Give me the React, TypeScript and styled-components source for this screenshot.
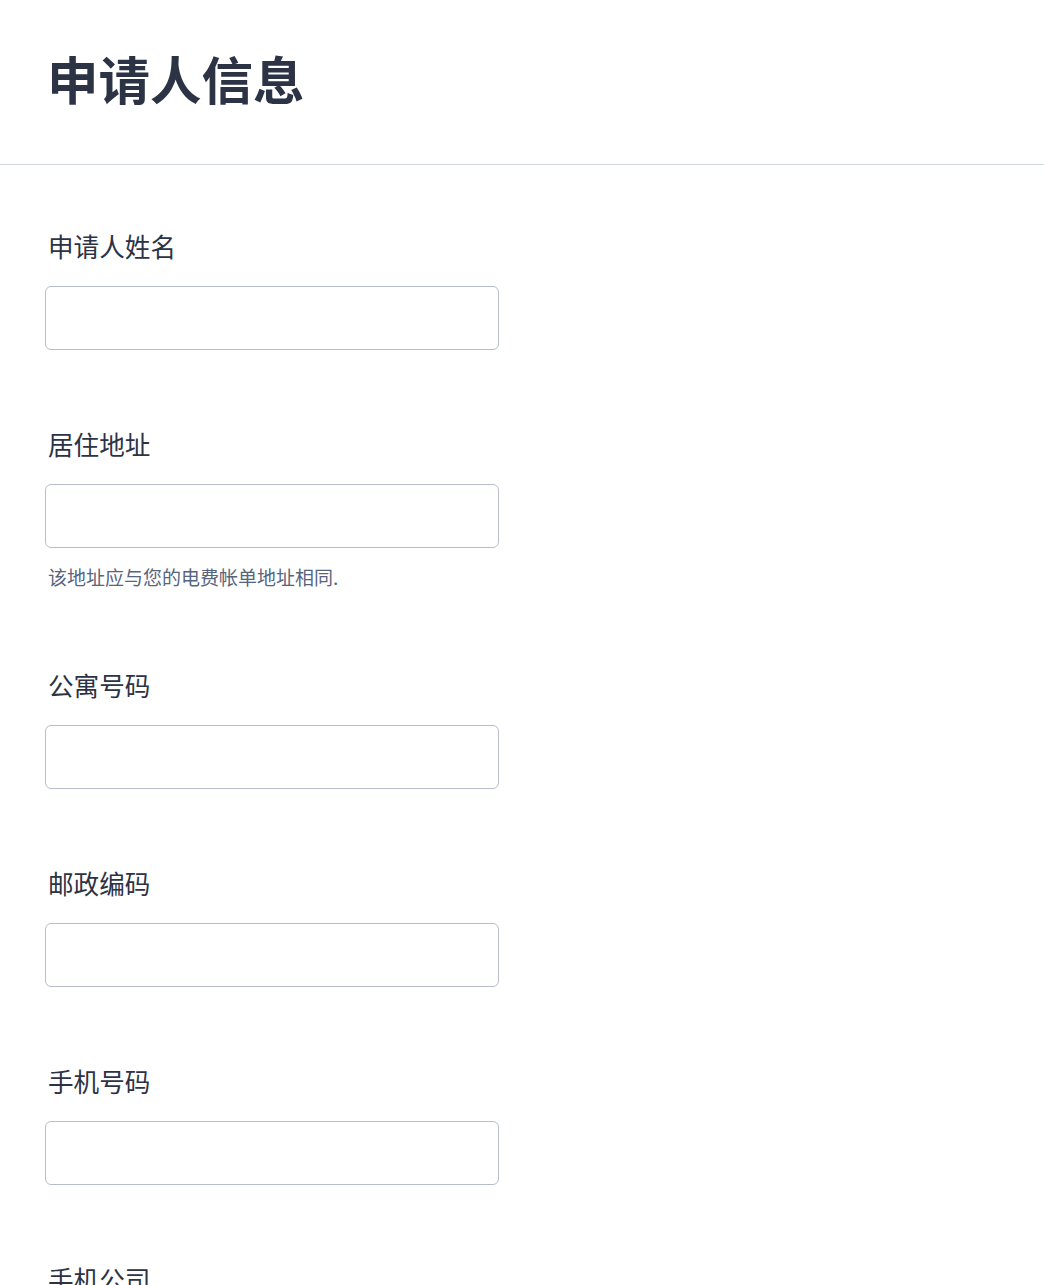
import styled, { createGlobalStyle } from "styled-components";

const GlobalStyle = createGlobalStyle`
  body {
    margin: 0;
    background: #ffffff;
    font-family: "Noto Sans CJK SC", "Noto Sans", sans-serif;
    color: #2c3345;
  }
`;

type FieldProps = {
  label: string;
  hint?: string;
};

const Page = styled.div`
  width: 100%;
  min-height: 1285px;
  background: #ffffff;
`;

const Header = styled.header`
  padding: 48px 47px 56px;
  border-bottom: 1px solid #d3d8df;
`;

const Title = styled.h1`
  margin: 0;
  font-size: 51.5px;
  line-height: 60px;
  font-weight: 700;
  color: #2c3345;
`;

const Form = styled.form`
  display: flex;
  flex-direction: column;
  gap: 76px;
  padding: 63px 45px 40px;
`;

const FieldWrap = styled.div`
  display: flex;
  flex-direction: column;
`;

const Label = styled.label`
  padding-left: 3px;
  margin-bottom: 22px;
  font-size: 25.6px;
  line-height: 36px;
  color: #2c3345;
`;

const Input = styled.input`
  box-sizing: border-box;
  width: 454px;
  height: 64px;
  padding: 0 14px;
  border: 1px solid #b8bdc9;
  border-radius: 6px;
  background: #ffffff;
  font-size: 18px;
  outline: none;
`;

const Hint = styled.div`
  margin-top: 15px;
  padding-left: 3px;
  font-size: 19px;
  line-height: 28px;
  color: #57647e;
`;

function Field({ label, hint }: FieldProps) {
  return (
    <FieldWrap>
      <Label>{label}</Label>
      <Input type="text" />
      {hint && <Hint>{hint}</Hint>}
    </FieldWrap>
  );
}

const fields: FieldProps[] = [
  { label: "申请人姓名" },
  { label: "居住地址", hint: "该地址应与您的电费帐单地址相同." },
  { label: "公寓号码" },
  { label: "邮政编码" },
  { label: "手机号码" },
  { label: "手机公司" },
];

export default function App() {
  return (
    <Page>
      <GlobalStyle />
      <Header>
        <Title>申请人信息</Title>
      </Header>
      <Form onSubmit={(e) => e.preventDefault()}>
        {fields.map((f) => (
          <Field key={f.label} {...f} />
        ))}
      </Form>
    </Page>
  );
}
